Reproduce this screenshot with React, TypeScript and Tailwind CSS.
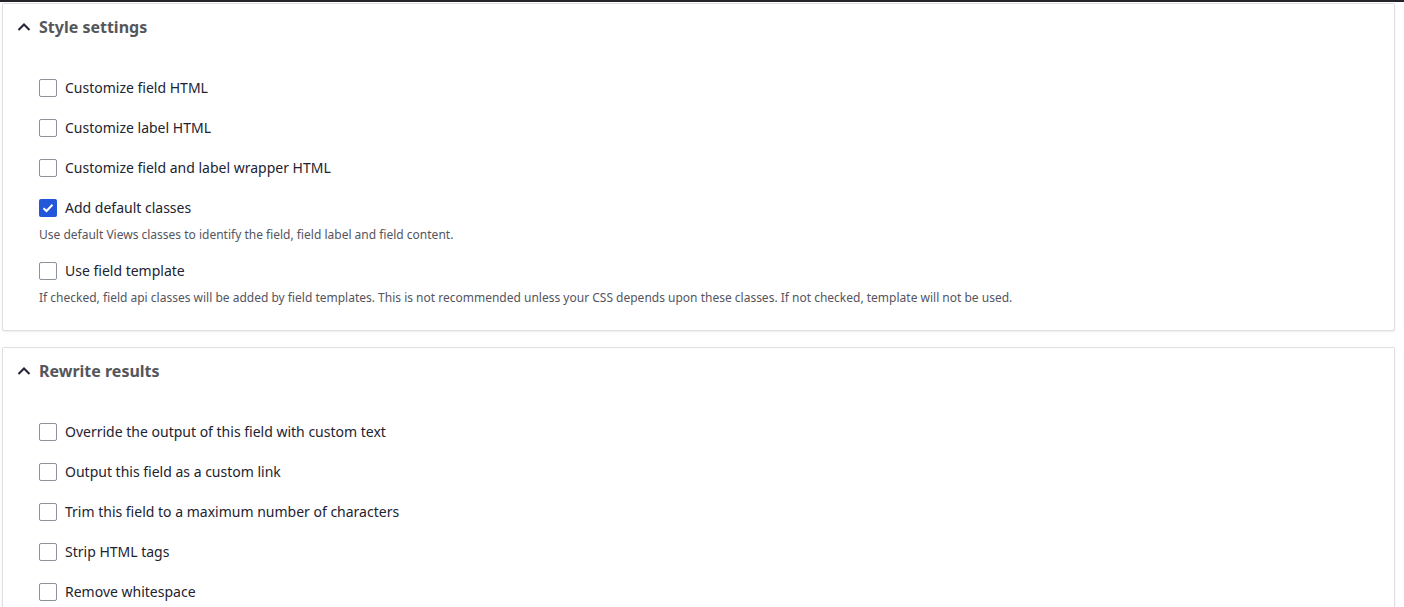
import React from 'react';

interface Option {
  label: string;
  checked?: boolean;
  description?: string;
}

const styleOptions: Option[] = [
  { label: 'Customize field HTML' },
  { label: 'Customize label HTML' },
  { label: 'Customize field and label wrapper HTML' },
  {
    label: 'Add default classes',
    checked: true,
    description: 'Use default Views classes to identify the field, field label and field content.',
  },
  {
    label: 'Use field template',
    description:
      'If checked, field api classes will be added by field templates. This is not recommended unless your CSS depends upon these classes. If not checked, template will not be used.',
  },
];

const rewriteOptions: Option[] = [
  { label: 'Override the output of this field with custom text' },
  { label: 'Output this field as a custom link' },
  { label: 'Trim this field to a maximum number of characters' },
  { label: 'Strip HTML tags' },
  { label: 'Remove whitespace' },
];

const Chevron = () => (
  <svg width="14" height="10" viewBox="0 0 14 10" fill="none" className="shrink-0">
    <path d="M1.5 8L7 2.5L12.5 8" stroke="#222330" strokeWidth="2" />
  </svg>
);

const Checkbox = ({ checked }: { checked?: boolean }) =>
  checked ? (
    <span className="w-[18px] h-[18px] rounded-[2px] bg-[#2257d9] flex items-center justify-center shrink-0">
      <svg width="12" height="10" viewBox="0 0 12 10" fill="none">
        <path d="M1.5 5.2L4.5 8L10.5 1.8" stroke="white" strokeWidth="2" />
      </svg>
    </span>
  ) : (
    <span className="w-[18px] h-[18px] rounded-[2px] border border-[#8e929c] bg-white shrink-0" />
  );

const OptionRow = ({ option }: { option: Option }) => (
  <div className="mt-[22px] first:mt-0">
    <label className="flex items-center gap-2 h-[18px] cursor-pointer">
      <Checkbox checked={option.checked} />
      <span className="text-[14px] text-[#222330] leading-[18px]">{option.label}</span>
    </label>
    {option.description && (
      <p className="mt-[10px] -mb-[3px] text-[12px] leading-[16px] text-[#545560]">{option.description}</p>
    )}
  </div>
);

const Section = ({ title, options, last }: { title: string; options: Option[]; last?: boolean }) => (
  <div
    className={`border border-[#dedfe4] rounded-[2px] bg-white shadow-[0_1px_2px_rgba(34,35,48,0.08)] ${
      last ? 'h-[262px] border-b-0 rounded-b-none' : 'pb-[27px]'
    }`}
  >
    <div className="flex items-center gap-[8px] pl-[14px] h-[46px]">
      <Chevron />
      <h2 className="text-[16px] font-bold text-[#55565b]">{title}</h2>
    </div>
    <div className="pl-[36px] pt-[29px]">
      {options.map(o => (
        <OptionRow key={o.label} option={o} />
      ))}
    </div>
  </div>
);

export default function App() {
  return (
    <div
      className="w-[1404px] h-[607px] overflow-hidden bg-white"
      style={{ fontFamily: '"Noto Sans", "Open Sans", sans-serif' }}
    >
      <div className="h-[2px] bg-[#232429]" />
      <div className="pl-[2px] pr-[9px] pt-[1px] flex flex-col gap-[16px]">
        <Section title="Style settings" options={styleOptions} />
        <Section title="Rewrite results" options={rewriteOptions} last />
      </div>
    </div>
  );
}
